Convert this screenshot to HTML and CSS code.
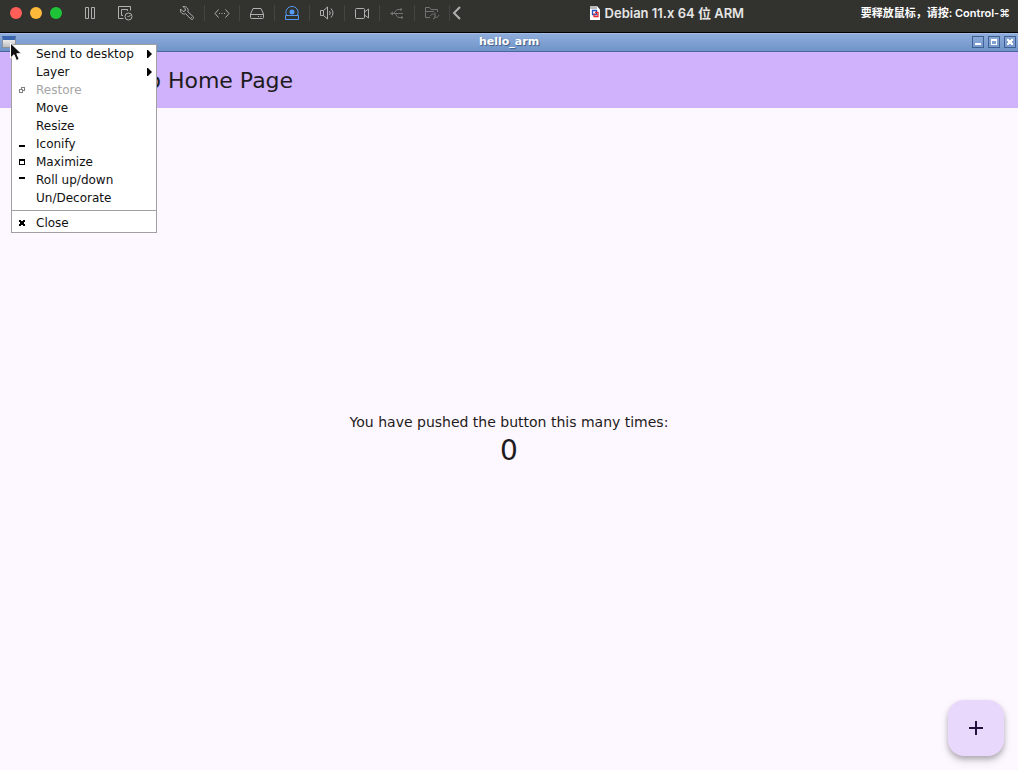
FILE: index.html
```
<!DOCTYPE html>
<html lang="en">
<head>
    <meta charset="UTF-8">
    <meta name="viewport" content="width=device-width, initial-scale=1.0">
    <title>hello_arm</title>
    <link rel="stylesheet" href="styles.css">
</head>
<body>
    <header class="vm-bar">
        <div class="lights">
            <button class="light red" aria-label="Close"></button>
            <button class="light yellow" aria-label="Minimize"></button>
            <button class="light green" aria-label="Zoom"></button>
        </div>
        <div class="tools">
            <button class="tool" aria-label="Pause">
                <svg width="16" height="16" viewBox="0 0 16 16"><path d="M3.500 2.500h3v11h-3zM9.500 2.500h3v11h-3z"/></svg>
            </button>
            <button class="tool snapshot" aria-label="Snapshots">
                <svg width="16" height="16" viewBox="0 0 16 16"><path d="M6.500 13.500h-5v-12h12v4M6 10.500H4.500v-6h6v1.500"/><circle cx="11.500" cy="11.500" r="3.500"/><path d="M13.500 10l-2 2-1-1"/></svg>
            </button>
            <button class="tool split" aria-label="Settings">
                <svg width="16" height="16" viewBox="0 0 16 16"><path d="M4 1.500L6.500 4 6 6 4 6.500 1.500 4c-.5 2.500.8 4.700 3 5 1 .1 1.500 0 2.200-.3L11.500 13.800c2 1.500 4-.6 2.500-2.400L8.800 6.800c1-2.800-.8-5.700-4.800-5.300z"/><path d="M12.500 12v.8"/></svg>
            </button>
            <button class="tool split" aria-label="Network">
                <svg width="16" height="16" viewBox="0 0 16 16"><path d="M4.500 4.500L1 8.500l3.500 4M11.500 4.500L15 8.500l-3.500 4M5 8.500h1M7.500 8.500h1M10 8.500h1"/></svg>
            </button>
            <button class="tool split" aria-label="Hard disk">
                <svg width="16" height="16" viewBox="0 0 16 16"><path d="M4 3.500h8L14.500 9v3.500q0 1-1 1h-11q-1 0-1-1V9zM1.500 9.500h13M9 11.500h1M11.500 11.500h1"/></svg>
            </button>
            <button class="tool split active" aria-label="Camera">
                <svg width="16" height="16" viewBox="0 0 16 16"><path d="M2.500 10.500C.5 5 4 1.500 8 1.500S15.500 5 13.500 10.500M1.500 10.500h13v4h-13z"/><circle cx="8" cy="7" r="1.500" stroke-width="2"/></svg>
            </button>
            <button class="tool split" aria-label="Sound">
                <svg width="16" height="16" viewBox="0 0 16 16"><path d="M1.500 5.500h3v5h-3zM4.500 5.500L8.500 2v12l-4-3.500M10.500 6q1.500 2 0 4M12 3.500q4 4.500 0 9"/></svg>
            </button>
            <button class="tool split" aria-label="Video">
                <svg width="16" height="16" viewBox="0 0 16 16"><path d="M2.500 3.500h7q1 0 1 1v8q0 1-1 1h-7q-1 0-1-1v-8q0-1 1-1zM10.500 7l4-3v9l-4-3"/></svg>
            </button>
            <button class="tool split dim" aria-label="USB">
                <svg width="16" height="16" viewBox="0 0 16 16"><path d="M2 8.500h12M4.500 8.500L8 4.500h3M6 8.500l3 4h3"/><path class="solid" d="M1 8.500l3-2v4zM11 3.500h2v2h-2zM12 11.500h2v2h-2z"/></svg>
            </button>
            <button class="tool split dim" aria-label="Shared folders">
                <svg width="16" height="16" viewBox="0 0 16 16"><path d="M6 12.500H1.500v-10h4l1.500 2h6.500V7M1.500 6.500H10M6.500 11c1-2.500 3-2.500 4.500-1V7.500M15 10c-1 2.500-3 3-4 1.500M9 14q3 0 2-4"/></svg>
            </button>
            <button class="tool arrow" aria-label="Collapse toolbar">
                <svg width="10" height="16" viewBox="0 0 10 16"><path d="M8 2L2 8l6 6"/></svg>
            </button>
        </div>
        <h1 class="vm-name">
            <svg width="12" height="14" viewBox="0 0 12 14"><path fill="#fff" d="M1 0h7l3 3.500V14H1z"/><path fill="#b9b9b9" d="M1 0h7v3H1z"/><path fill="none" stroke="#2456c4" stroke-width="1.300" d="M3.500 4.500h4v4h-4z"/><path fill="none" stroke="#e32b2b" stroke-width="1.300" d="M6 6.500h3v4H5v-3"/></svg>
            Debian 11.x 64 位 ARM
        </h1>
        <p class="hint">要释放鼠标，请按: Control-⌘</p>
    </header>

    <div class="title-bar">
        <button class="window-icon" aria-label="Window menu"></button>
        <h2>hello_arm</h2>
        <div class="window-btns">
            <button aria-label="Iconify"><svg width="10" height="10" viewBox="0 0 10 10"><path d="M2 6h6v2H2z"/></svg></button>
            <button aria-label="Maximize"><svg width="10" height="10" viewBox="0 0 10 10"><path fill-rule="evenodd" d="M2 2h6v6H2zM3 4v3h4V4z"/></svg></button>
            <button aria-label="Close"><svg width="10" height="10" viewBox="0 0 10 10"><path d="M2 2h2v1h2V2h2v2H7v2h1v2H6V7H4v1H2V6h1V4H2z"/></svg></button>
        </div>
    </div>

    <div class="app-bar">
        <h2>Flutter Demo Home Page</h2>
    </div>

    <main class="content">
        <p>You have pushed the button this many times:</p>
        <p class="count">0</p>
        <button class="fab" aria-label="Increment">
            <svg width="24" height="24" viewBox="0 0 24 24"><path d="M19 13h-6v6h-2v-6H5v-2h6V5h2v6h6z"/></svg>
        </button>
    </main>

    <div class="menu">
        <button><span class="icon"></span>Send to desktop<svg class="sub" width="5" height="8" viewBox="0 0 5 8"><path d="M0 0h1l4 4-4 4H0z"/></svg></button>
        <button><span class="icon"></span>Layer<svg class="sub" width="5" height="8" viewBox="0 0 5 8"><path d="M0 0h1l4 4-4 4H0z"/></svg></button>
        <button disabled><svg class="icon" viewBox="0 0 8 8"><path fill-rule="evenodd" d="M2 1h4v4H4v2H0V3h2zM3 2v1h1v1h1V2zM1 4v2h2V4z"/></svg>Restore</button>
        <button><span class="icon"></span>Move</button>
        <button><span class="icon"></span>Resize</button>
        <button><svg class="icon" viewBox="0 0 8 8"><path d="M0 5h6v2H0z"/></svg>Iconify</button>
        <button><svg class="icon" viewBox="0 0 8 8"><path fill-rule="evenodd" d="M0 1h6v6H0zM1 3v3h4V3z"/></svg>Maximize</button>
        <button><svg class="icon" viewBox="0 0 8 8"><path d="M0 1h6v2H0z"/></svg>Roll up/down</button>
        <button><span class="icon"></span>Un/Decorate</button>
        <hr>
        <button><svg class="icon" viewBox="0 0 8 8"><path d="M0 1h2v1h2V1h2v2H5v2h1v2H4V6H2v1H0V5h1V3H0z"/></svg>Close</button>
    </div>

    <svg class="cursor" width="13" height="20" viewBox="0 0 13 20"><path d="M.5 1v15l3.500-3.300 2.500 5.800 2.700-1.200-2.400-5.600h4.700z"/></svg>
</body>
</html>
```
FILE: styles.css
```
* {
    margin: 0;
    padding: 0;
    box-sizing: border-box;
}
body {
    display: flex;
    flex-direction: column;
    position: relative;
    min-height: 100vh;
    background: #fdf7ff;
    color: #1d1b20;
    font-family: "DejaVu Sans", sans-serif;
}
button {
    border: none;
    background: none;
    font-family: inherit;
    color: inherit;
}

/* virtual machine toolbar */
.vm-bar {
    display: flex;
    align-items: center;
    height: 33px;
    padding: 0 8px 6px 10px;
    background: #32322f;
    border-bottom: 1px solid #000;
    color: #e6e6e5;
    font-family: Inter, "Noto Sans CJK SC", sans-serif;
}
.lights {
    display: flex;
    gap: 8px;
}
.light {
    width: 12px;
    height: 12px;
    border-radius: 50%;
}
.red {
    background: #ff5f57;
}
.yellow {
    background: #fdb93a;
}
.green {
    background: #1ec337;
}
.tools {
    display: flex;
    align-items: center;
    margin-left: 10px;
}
.tool {
    display: flex;
    align-items: center;
    justify-content: center;
    width: 35px;
    height: 16px;
}
.tool svg {
    flex: none;
    fill: none;
    stroke: #b0b0ae;
}
.tool .solid {
    fill: #747472;
    stroke: none;
}
.snapshot {
    margin-right: 28px;
}
.split {
    border-right: 1px solid #444442;
}
.active svg {
    stroke: #559bf5;
}
.active circle {
    fill: #559bf5;
}
.dim svg {
    stroke: #747472;
}
.tool.arrow {
    width: 14px;
}
.arrow svg {
    stroke-width: 2;
}
.vm-name {
    display: flex;
    flex: 1;
    align-items: center;
    justify-content: center;
    gap: 4px;
    margin-left: 8px;
    font-size: 13px;
    font-weight: 600;
    line-height: 20px;
    white-space: nowrap;
}
.hint {
    font-size: 11px;
    font-weight: 600;
    line-height: 20px;
    color: #fff;
    white-space: nowrap;
}

/* window title bar */
.title-bar {
    display: grid;
    grid-template-columns: 1fr auto 1fr;
    align-items: center;
    height: 19px;
    padding: 0 2px 1px;
    background: linear-gradient(#8eacdb, #7094c8);
    border-top: 1px solid #a3bce4;
    border-bottom: 1px solid #4a6798;
    color: #fff;
}
.title-bar h2 {
    font-size: 11px;
    line-height: 16px;
    text-shadow: 1px 1px 1px #3f5a87;
}
.window-icon {
    width: 14px;
    height: 12px;
    background: linear-gradient(#ececec, #bdbdbd);
    border: 1px solid #8a8f98;
    border-top: 4px solid #3a66b0;
}
.window-btns {
    display: flex;
    justify-content: flex-end;
    gap: 4px;
}
.window-btns button {
    width: 12px;
    height: 12px;
    border: 1px solid #3f5f92;
}
.window-btns svg {
    display: block;
    fill: #fff;
}

/* app */
.app-bar {
    display: flex;
    align-items: center;
    height: 56px;
    padding: 2px 16px 0;
    background: #cfb2fb;
}
.app-bar h2 {
    font-size: 22px;
    font-weight: 400;
    line-height: 28px;
}
.content {
    display: flex;
    flex: 1;
    flex-direction: column;
    align-items: center;
    justify-content: center;
    position: relative;
    padding-top: 4px;
    font-size: 14px;
    line-height: 20px;
}
.count {
    font-size: 28px;
    line-height: 38px;
}
.fab {
    display: flex;
    align-items: center;
    justify-content: center;
    position: absolute;
    right: 14px;
    bottom: 14px;
    width: 56px;
    height: 56px;
    border-radius: 16px;
    background: #e8d8fc;
    box-shadow: 0 3px 5px rgba(0, 0, 0, 0.22), 0 5px 10px rgba(0, 0, 0, 0.12);
}
.fab svg {
    fill: #22103f;
}

/* window menu */
.menu {
    position: absolute;
    top: 44px;
    left: 11px;
    width: 146px;
    background: #fff;
    border: 1px solid #a0a0a0;
}
.menu button {
    display: flex;
    align-items: center;
    width: 100%;
    height: 18px;
    padding: 0 4px 0 7px;
    font-size: 12px;
    line-height: 18px;
    color: #111;
    white-space: nowrap;
}
.menu button:disabled {
    color: #a5a5a5;
}
.menu svg {
    fill: #000;
}
.menu button:disabled svg {
    fill: #808080;
}
.icon {
    width: 8px;
    height: 8px;
    margin-right: 9px;
}
.sub {
    margin-left: auto;
}
.menu hr {
    margin: 3px 0;
    border: none;
    border-top: 1px solid #a0a0a0;
}
.cursor {
    position: absolute;
    top: 42px;
    left: 10px;
    fill: #111;
    stroke: #fff;
}
```
